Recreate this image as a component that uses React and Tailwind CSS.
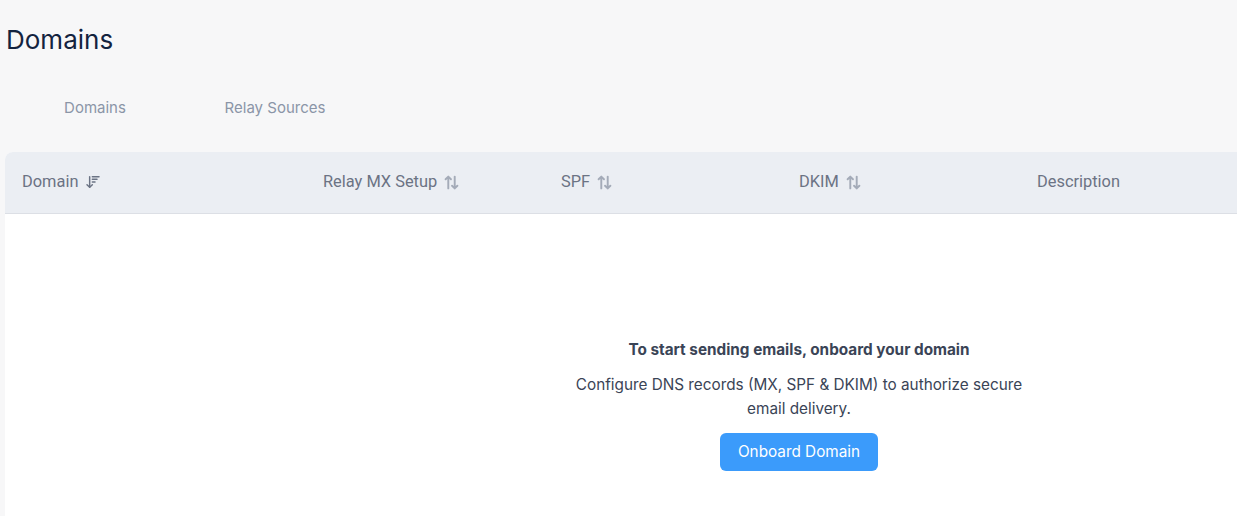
import { ArrowDownWideNarrow } from 'lucide-react';

const SortIcon = () => (
  <svg width="15" height="15" viewBox="0 0 14 14" fill="none" stroke="currentColor" strokeWidth="1.8" strokeLinecap="round" strokeLinejoin="round">
    <path d="M4 12.5V1.5M1.5 4 4 1.5 6.5 4" />
    <path d="M10 1.5v11M7.5 10l2.5 2.5 2.5-2.5" />
  </svg>
);

const columns = [
  { label: 'Domain', width: 'w-[301px]', sort: 'active' },
  { label: 'Relay MX Setup', width: 'w-[238px]', sort: 'idle' },
  { label: 'SPF', width: 'w-[238px]', sort: 'idle' },
  { label: 'DKIM', width: 'w-[238px]', sort: 'idle' },
  { label: 'Description', width: 'flex-1', sort: null },
];

export default function App() {
  return (
    <div className="flex h-[516px] flex-col overflow-hidden bg-[#f7f7f8] font-['Inter','Liberation_Sans',sans-serif]">
      <h1 className="pl-[6px] pt-[24px] text-[26px] leading-[32px] text-[#13233f]">Domains</h1>

      <div className="mt-[41px] flex text-[15px] text-[#8b95a7]">
        <button className="w-[190px] text-center leading-[22px]">Domains</button>
        <button className="w-[170px] text-center leading-[22px]">Relay Sources</button>
      </div>

      <div className="ml-[5px] mt-[33px] w-[1588px] flex-1 rounded-tl-lg bg-white">
        <div className="flex h-[62px] items-center rounded-tl-lg border-b border-[#dcdfe5] bg-[#ebeef3] pl-[17px] font-['Roboto',sans-serif] text-[16.4px] text-[#6b7384]">
          {columns.map((c) => (
            <div key={c.label} className={`${c.width} flex items-center gap-[7px]`}>
              <span>{c.label}</span>
              {c.sort === 'active' && <ArrowDownWideNarrow size={16} strokeWidth={2.2} className="text-[#6b7384]" />}
              {c.sort === 'idle' && <span className="text-[#a4abb8]"><SortIcon /></span>}
            </div>
          ))}
        </div>

        <div className="flex flex-col items-center pt-[125px] text-[#3a4456]">
          <p className="text-[15.3px] font-bold leading-[22px]">To start sending emails, onboard your domain</p>
          <p className="mt-[12px] w-[470px] text-center text-[15.3px] leading-[24px]">
            Configure DNS records (MX, SPF &amp; DKIM) to authorize secure email delivery.
          </p>
          <button className="mt-[12px] h-[38px] w-[158px] rounded-md bg-[#3b9bfb] text-[15.3px] text-white">
            Onboard Domain
          </button>
        </div>
      </div>
    </div>
  );
}
